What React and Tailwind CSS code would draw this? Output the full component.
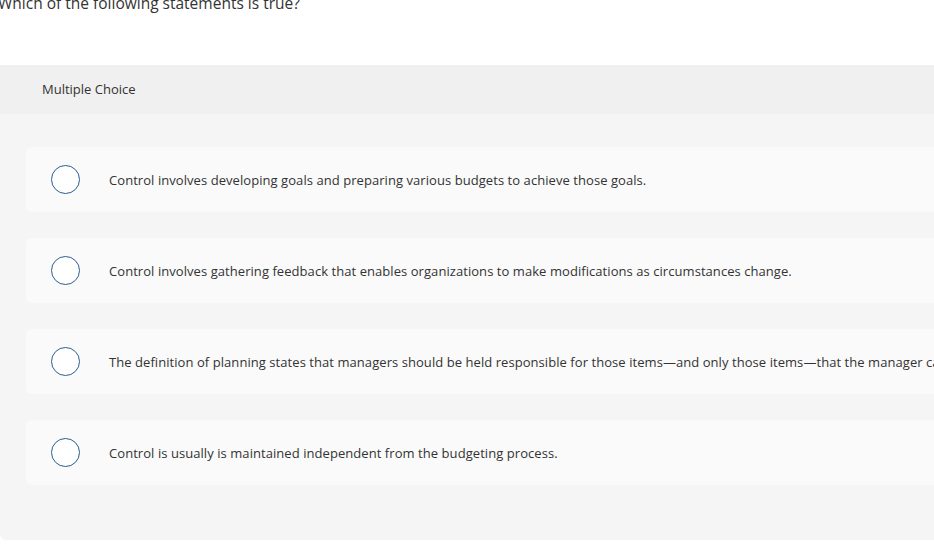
const options = [
  "Control involves developing goals and preparing various budgets to achieve those goals.",
  "Control involves gathering feedback that enables organizations to make modifications as circumstances change.",
  "The definition of planning states that managers should be held responsible for those items\u2014and only those items\u2014that the manager can actually control to a significant extent.",
  "Control is usually is maintained independent from the budgeting process.",
];

function App() {
  return (
    <div
      className="h-[545px] w-[934px] overflow-hidden bg-white text-[#333]"
      style={{ fontFamily: '"Open Sans", "Lato", sans-serif' }}
    >
      <p className="-mt-[7px] -ml-[2px] whitespace-nowrap text-[15.5px] leading-[20px] text-[#333]">
        Which of the following statements is true?
      </p>

      <div className="mt-[52px] w-[1100px] rounded-bl-md bg-[#f5f5f5]">
        <div className="flex h-[49px] items-center bg-[#f0f0f0] px-[42px] text-[13px]">
          Multiple Choice
        </div>

        <div className="flex flex-col gap-[26px] pt-[33px] pb-[55px] pl-[26px]">
          {options.map((text) => (
            <div
              key={text}
              className="flex h-[65px] items-center rounded-md bg-[#fafafa] pl-[25px]"
            >
              <span className="h-[29px] w-[29px] shrink-0 rounded-full border-[1.5px] border-[#2a5e91] bg-white" />
              <span className="ml-[29px] whitespace-nowrap pt-[2px] text-[13px] tracking-[0.06px]">
                {text}
              </span>
            </div>
          ))}
        </div>
      </div>
    </div>
  );
}

export default App;
